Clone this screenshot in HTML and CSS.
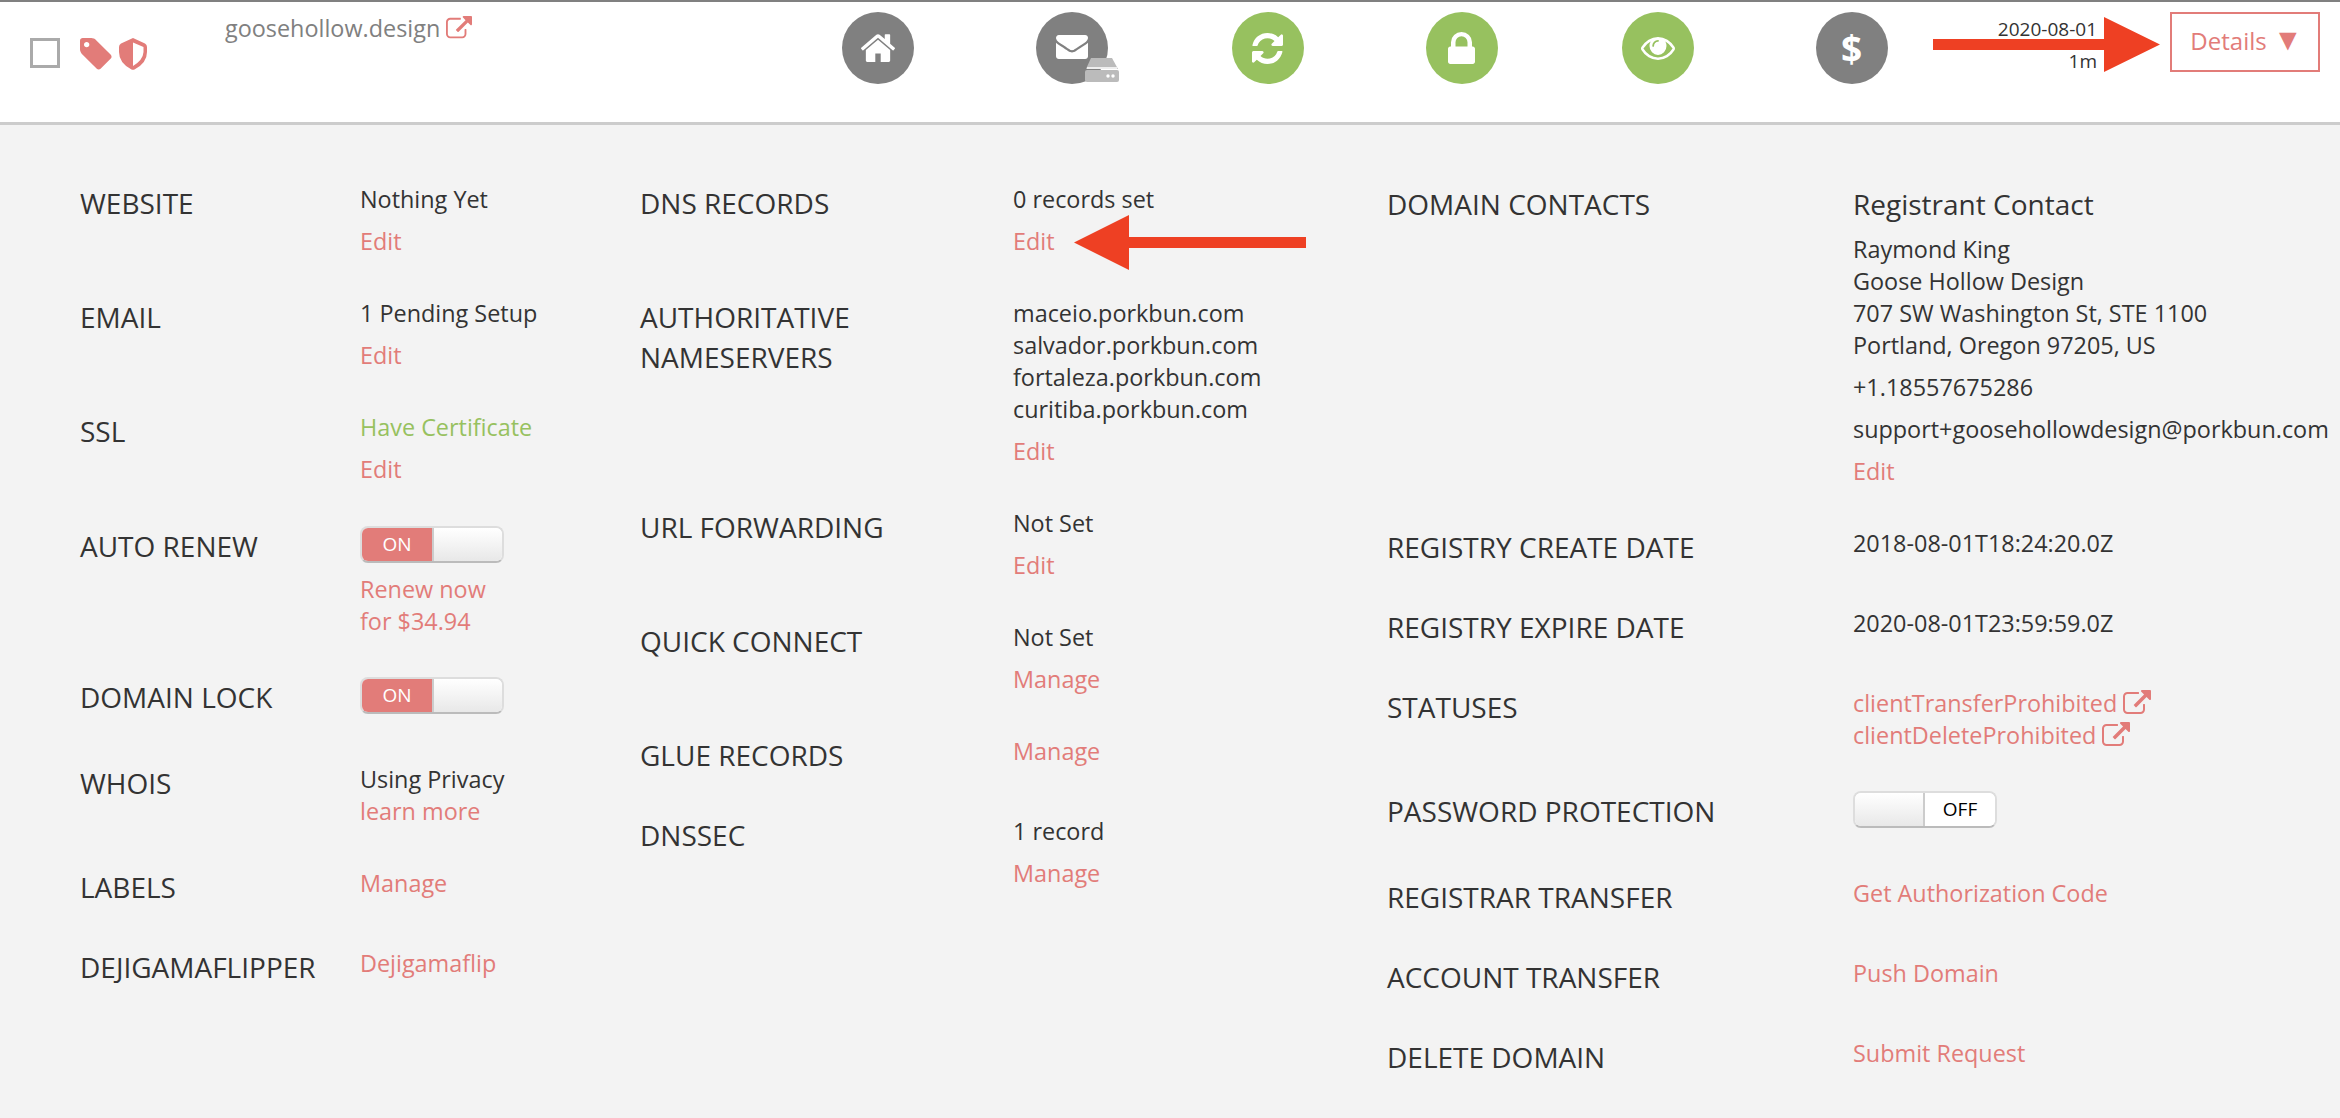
FILE: index.html
```html
<!DOCTYPE html>
<html lang="en">
<head>
<meta charset="utf-8">
<title>goosehollow.design</title>
<link rel="stylesheet" href="styles.css">
</head>
<body>
<svg class="sprite" aria-hidden="true">
  <symbol id="i-ext" viewBox="0 0 1792 1792"><path d="M1408 928v320q0 119-84.5 203.5t-203.5 84.5h-832q-119 0-203.5-84.5t-84.5-203.5v-832q0-119 84.5-203.5t203.5-84.5h704q14 0 23 9t9 23v64q0 14-9 23t-23 9h-704q-66 0-113 47t-47 113v832q0 66 47 113t113 47h832q66 0 113-47t47-113v-320q0-14 9-23t23-9h64q14 0 23 9t9 23zm384-864v512q0 26-19 45t-45 19-45-19l-176-176-652 652q-10 10-23 10t-23-10l-114-114q-10-10-10-23t10-23l652-652-176-176q-19-19-19-45t19-45 45-19h512q26 0 45 19t19 45z"/></symbol>
  <symbol id="i-tag" viewBox="128 128 1536 1536" preserveAspectRatio="none"><path d="M576 448q0-53-37.5-90.5t-90.5-37.5-90.5 37.5-37.5 90.5 37.5 90.5 90.5 37.5 90.5-37.5 37.5-90.5zm1067 576q0 53-37 90l-491 492q-39 37-91 37-53 0-90-37l-715-716q-38-37-64.5-101t-26.5-117v-416q0-52 38-90t90-38h416q53 0 117 26.5t102 64.5l715 714q37 39 37 91z"/></symbol>
  <symbol id="i-shield" viewBox="0 0 28 32"><path fill-rule="evenodd" d="M14 0l12 5.500q2 1 2 3.500v5q0 11-12.500 17.500-1.500.7-3 0Q0 25 0 14V9q0-2.500 2-3.500zM14 4.500V28q10-6 10.500-14V9z"/></symbol>
  <symbol id="i-home" viewBox="90 200 1612 1340" preserveAspectRatio="none"><path d="M1472 992v480q0 26-19 45t-45 19h-384v-384h-256v384h-384q-26 0-45-19t-19-45v-480q0-1 .5-3t.5-3l575-474 575 474q1 2 1 6zm223-69l-62 74q-8 9-21 11h-3q-13 0-21-7l-692-577-692 577q-12 8-24 7-13-2-21-11l-62-74q-8-10-7-23.5t11-21.5l719-599q32-26 76-26t76 26l244 204v-195q0-14 9-23t23-9h192q14 0 23 9t9 23v408l219 182q10 8 11 21.5t-7 23.5z"/></symbol>
  <symbol id="i-mail" viewBox="0 256 1792 1408" preserveAspectRatio="none"><path d="M1792 710v794q0 66-47 113t-113 47h-1472q-66 0-113-47t-47-113v-794q44 49 101 87 362 246 497 345 57 42 92.5 65.5t94.5 48 110 24.5h2q51 0 110-24.5t94.5-48 92.5-65.5q170-123 498-345 57-39 100-87zm0-294q0 79-49 151t-122 123q-376 261-468 325-10 7-42.5 30.5t-54 38-52 32.5-57.5 27-50 9h-2q-23 0-50-9t-57.5-27-52-32.5-54-38-42.5-30.5q-91-64-262-182.5t-205-142.5q-62-42-117-115.5t-55-136.5q0-78 41.5-130t118.5-52h1472q65 0 112.5 47t47.5 113z"/></symbol>
  <symbol id="i-refresh" viewBox="128 128 1536 1536"><path d="M1639 1056q0 5-1 7-64 268-268 434.5t-478 166.5q-146 0-282.5-55t-243.5-157l-129 129q-19 19-45 19t-45-19-19-45v-448q0-26 19-45t45-19h448q26 0 45 19t19 45-19 45l-137 137q71 66 161 102t187 36q134 0 250-65t186-179q11-17 53-117 8-23 30-23h192q13 0 22.5 9.5t9.5 22.5zm25-800v448q0 26-19 45t-45 19h-448q-26 0-45-19t-19-45 19-45l138-138q-148-137-349-137-134 0-250 65t-186 179q-11 17-53 117-8 23-30 23h-199q-13 0-22.5-9.5t-9.5-22.5v-7q65-268 270-434.5t480-166.5q146 0 284 55.5t245 156.5l130-129q19-19 45-19t45 19 19 45z"/></symbol>
  <symbol id="i-lock" viewBox="320 128 1152 1408" preserveAspectRatio="none"><path d="M640 768h512v-192q0-106-75-181t-181-75-181 75-75 181v192zm832 96v576q0 40-28 68t-68 28h-960q-40 0-68-28t-28-68v-576q0-40 28-68t68-28h32v-192q0-184 132-316t316-132 316 132 132 316v192h32q40 0 68 28t28 68z"/></symbol>
  <symbol id="i-eye" viewBox="0 384 1792 1152" preserveAspectRatio="none"><path d="M1664 960q-152-236-381-353 61 104 61 225 0 185-131.5 316.5t-316.5 131.5-316.5-131.5-131.5-316.5q0-121 61-225-229 117-381 353 133 205 333.5 326.5t434.5 121.5 434.5-121.5 333.5-326.5zm-720-384q0-20-14-34t-34-14q-125 0-214.5 89.5t-89.5 214.5q0 20 14 34t34 14 34-14 14-34q0-86 61-147t147-61q20 0 34-14t14-34zm848 384q0 34-20 69-140 230-376.5 368.5t-499.5 138.5-499.5-139-376.5-368q-20-35-20-69t20-69q140-229 376.5-368t499.5-139 499.5 139 376.5 368q20 35 20 69z"/></symbol>
</svg>

<header class="bar">
  <span class="check"></span>
  <div class="flags">
    <svg class="flag-tag"><use href="#i-tag"/></svg>
    <svg class="flag-shield"><use href="#i-shield"/></svg>
  </div>
  <div class="domain">goosehollow.design <svg class="ext ext-domain"><use href="#i-ext"/></svg></div>
  <div class="services">
    <div class="cell"><span class="dot gray"><svg class="ic-home"><use href="#i-home"/></svg></span></div>
    <div class="cell"><span class="dot gray"><svg class="ic-mail"><use href="#i-mail"/></svg>
      <svg class="server" viewBox="0 0 34 24"><path d="M6 0h21l6 11H1z"/><rect x="0" y="12" width="34" height="12" rx="2"/><path class="server-line" d="M2 10h30"/><circle class="server-dot" cx="23" cy="18" r="1.7"/><circle class="server-dot" cx="28" cy="18" r="1.7"/></svg></span></div>
    <div class="cell"><span class="dot green"><svg class="ic-refresh"><use href="#i-refresh"/></svg></span></div>
    <div class="cell"><span class="dot green"><svg class="ic-lock"><use href="#i-lock"/></svg></span></div>
    <div class="cell"><span class="dot green"><svg class="ic-eye"><use href="#i-eye"/></svg></span></div>
    <div class="cell"><span class="dot gray"><span class="dollar">$</span></span></div>
  </div>
  <div class="dates"><div>2020-08-01</div><div>1m</div></div>
  <button class="details">Details <span class="caret">▼</span></button>
  <svg class="arrow arrow-right" viewBox="0 0 227 55"><path d="M0 22h171V0l56 27.500-56 27.500V33H0z"/></svg>
</header>

<main class="panel">
  <section class="col col-a">
    <div class="row"><div class="label">WEBSITE</div><div class="val"><div>Nothing Yet</div><a class="link gap">Edit</a></div></div>
    <div class="row"><div class="label">EMAIL</div><div class="val"><div>1 Pending Setup</div><a class="link gap">Edit</a></div></div>
    <div class="row"><div class="label">SSL</div><div class="val"><div class="ok">Have Certificate</div><a class="link gap">Edit</a></div></div>
    <div class="row row-renew"><div class="label">AUTO RENEW</div><div class="val"><div class="toggle on"><span class="side">ON</span><span class="knob"></span></div><a class="link gap">Renew now<br>for $34.94</a></div></div>
    <div class="row row-toggle"><div class="label">DOMAIN LOCK</div><div class="val"><div class="toggle on"><span class="side">ON</span><span class="knob"></span></div></div></div>
    <div class="row"><div class="label">WHOIS</div><div class="val"><div>Using Privacy</div><a class="link">learn more</a></div></div>
    <div class="row"><div class="label">LABELS</div><div class="val"><a class="link">Manage</a></div></div>
    <div class="row"><div class="label">DEJIGAMAFLIPPER</div><div class="val"><a class="link">Dejigamaflip</a></div></div>
  </section>

  <section class="col col-b">
    <div class="row"><div class="label">DNS RECORDS</div><div class="val"><div>0 records set</div><a class="link gap">Edit</a></div></div>
    <div class="row"><div class="label">AUTHORITATIVE<br>NAMESERVERS</div><div class="val"><div>maceio.porkbun.com<br>salvador.porkbun.com<br>fortaleza.porkbun.com<br>curitiba.porkbun.com</div><a class="link gap">Edit</a></div></div>
    <div class="row"><div class="label">URL FORWARDING</div><div class="val"><div>Not Set</div><a class="link gap">Edit</a></div></div>
    <div class="row"><div class="label">QUICK CONNECT</div><div class="val"><div>Not Set</div><a class="link gap">Manage</a></div></div>
    <div class="row"><div class="label">GLUE RECORDS</div><div class="val"><a class="link">Manage</a></div></div>
    <div class="row"><div class="label">DNSSEC</div><div class="val"><div>1 record</div><a class="link gap">Manage</a></div></div>
    <svg class="arrow arrow-left" viewBox="0 0 232 55"><path d="M232 22H55V0L0 27.500 55 55V33h177z"/></svg>
  </section>

  <section class="col col-c">
    <div class="row"><div class="label">DOMAIN CONTACTS</div><div class="val">
      <div class="contact-head">Registrant Contact</div>
      <div class="contact-name">Raymond King<br>Goose Hollow Design<br>707 SW Washington St, STE 1100<br>Portland, Oregon 97205, US</div>
      <div class="gap">+1.18557675286</div>
      <div class="gap">support+goosehollowdesign@porkbun.com</div>
      <a class="link gap">Edit</a>
    </div></div>
    <div class="row"><div class="label">REGISTRY CREATE DATE</div><div class="val"><div>2018-08-01T18:24:20.0Z</div></div></div>
    <div class="row"><div class="label">REGISTRY EXPIRE DATE</div><div class="val"><div>2020-08-01T23:59:59.0Z</div></div></div>
    <div class="row"><div class="label">STATUSES</div><div class="val"><a class="link">clientTransferProhibited <svg class="ext"><use href="#i-ext"/></svg></a><a class="link">clientDeleteProhibited <svg class="ext"><use href="#i-ext"/></svg></a></div></div>
    <div class="row row-toggle"><div class="label">PASSWORD PROTECTION</div><div class="val"><div class="toggle off"><span class="knob"></span><span class="side">OFF</span></div></div></div>
    <div class="row"><div class="label">REGISTRAR TRANSFER</div><div class="val"><a class="link">Get Authorization Code</a></div></div>
    <div class="row"><div class="label">ACCOUNT TRANSFER</div><div class="val"><a class="link">Push Domain</a></div></div>
    <div class="row"><div class="label">DELETE DOMAIN</div><div class="val"><a class="link">Submit Request</a></div></div>
  </section>
</main>
</body>
</html>
```

FILE: styles.css
```css
* { box-sizing: border-box; }
html, body { margin: 0; height: 100%; }
body {
  font-family: "Open Sans", "Noto Sans", sans-serif;
  font-size: 23.400px;
  line-height: 32px;
  color: #333;
  background: #f3f3f3;
  overflow: hidden;
}
.sprite { display: none; }

.bar {
  position: relative;
  display: flex;
  align-items: flex-start;
  height: 125px;
  padding-left: 30px;
  background: #fff;
  border-top: 2px solid #808080;
  border-bottom: 3px solid #ccc;
}
.check {
  width: 30px;
  height: 30px;
  margin-top: 36px;
  border: 3px solid #aaa;
  background: #fff;
}
.flags {
  display: flex;
  gap: 7px;
  width: 145px;
  margin: 36px 0 0 20px;
}
.flags svg { fill: #e27c79; height: 32px; }
.flag-tag { width: 32px; }
.flag-shield { width: 28px; }
.domain {
  width: 555px;
  margin-top: 10px;
  color: #808080;
  white-space: nowrap;
}
.ext { width: 28px; height: 28px; fill: #e27c79; vertical-align: -6px; }
.ext-domain { width: 26px; height: 26px; vertical-align: -5px; }

.services { display: flex; width: 1170px; margin-top: 10px; }
.cell { width: 195px; display: flex; justify-content: center; }
.cell:nth-child(even) .dot { margin-right: 2px; }
.dot {
  position: relative;
  display: flex;
  align-items: center;
  justify-content: center;
  width: 72px;
  height: 72px;
  border-radius: 50%;
  fill: #fff;
}
.gray { background: #808080; }
.green { background: #97c15f; }
.ic-home { width: 34px; height: 29px; margin-bottom: 2px; }
.ic-mail { width: 32px; height: 24px; margin-bottom: 2px; }
.ic-refresh { width: 31px; height: 31px; }
.ic-lock { width: 27px; height: 32px; }
.ic-eye { width: 34px; height: 23px; }
.dollar { color: #fff; font-size: 37px; font-weight: 700; line-height: 1; }
.server {
  position: absolute;
  left: 49px;
  top: 46px;
  width: 34px;
  height: 24px;
  fill: #bbb;
}
.server-line { stroke: #fff; stroke-width: 1.500; }
.server .server-dot { fill: #fff; }

.dates {
  width: 147px;
  margin-top: 11px;
  text-align: right;
  font-size: 19px;
  color: #333;
}
.details {
  width: 150px;
  height: 60px;
  margin: 10px 0 0 73px;
  padding: 0 0 3px 3px;
  background: #fff;
  border: 2px solid #e27c79;
  color: #e27c79;
  font: inherit;
  font-size: 24px;
}
.caret { font-size: 30px; line-height: 1; }
.arrow { position: absolute; fill: #ee4023; }
.arrow-right { left: 1933px; top: 15px; width: 227px; height: 55px; }

.panel {
  display: flex;
  align-items: flex-start;
  padding: 59px 0 0 80px;
}
.col { position: relative; display: flex; flex-direction: column; gap: 40px; }
.row { display: grid; }
.col-a { width: 560px; margin-top: -1px; }
.col-a .row { grid-template-columns: 280px 1fr; }
.col-b { width: 747px; margin-top: -1px; }
.col-b .row { grid-template-columns: 373px 1fr; }
.col-c { flex: 1; }
.col-c .row { grid-template-columns: 466px 1fr; }
.label { font-size: 28px; line-height: 40px; color: #333; }
.val { min-width: 0; white-space: nowrap; }
.link { display: block; color: #e27c79; }
.gap { margin-top: 10px; }
.ok { color: #97c15f; }
.row-toggle { min-height: 46px; }
.row-renew { margin-top: 1px; }

.contact-head { font-size: 28px; line-height: 40px; color: #333; margin-bottom: 9px; }

.toggle {
  display: flex;
  width: 144px;
  height: 37px;
  border: 2px solid #ddd;
  border-bottom-color: #bbb;
  border-radius: 8px;
  overflow: hidden;
  background: #fff;
  font-size: 19px;
  line-height: 33px;
}
.side { width: 70px; text-align: center; }
.on .side { background: #e27c79; color: #fff; }
.off .side { color: #000; background: #fff; }
.knob { flex: 1; background: linear-gradient(#fff, #e8e8e8); }
.off .knob { border-right: 2px solid #ccc; }
.on .knob { border-left: 2px solid #ccc; }

.arrow-left { left: 434px; top: 32px; width: 232px; height: 55px; }
```
